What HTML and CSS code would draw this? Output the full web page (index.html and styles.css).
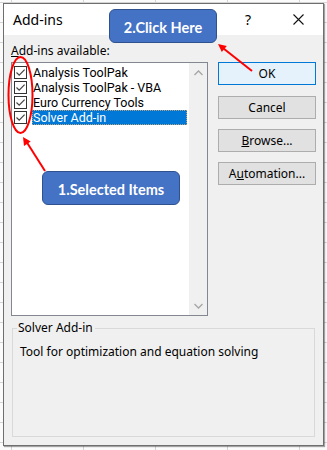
FILE: index.html
```html
<!DOCTYPE html>
<html lang="en">
<head>
    <meta charset="UTF-8">
    <meta name="viewport" content="width=device-width, initial-scale=1.0">
    <title>Add-ins</title>
    <link rel="stylesheet" href="styles.css">
</head>
<body>

    <!-- Dialog -->
    <div class="dialog">
        <div class="titlebar">
            <span class="title">Add-ins</span>
            <span class="help">?</span>
            <span class="close">
                <svg width="11" height="11" viewBox="0 0 11 11"><path d="M0.5 0.5 L10.5 10.5 M10.5 0.5 L0.5 10.5" stroke="#111" stroke-width="1.1" fill="none"/></svg>
            </span>
        </div>

        <div class="dialog-body">
            <div class="label"><u>A</u>dd-ins available:</div>

            <div class="main-row">
                <!-- Add-in list -->
                <div class="listbox">
                    <ul class="items">
                        <li><span class="check"><svg width="11" height="11" viewBox="0 0 11 11"><path d="M1.5 5.5 L4.2 8.2 L9.6 2.6" stroke="#444" stroke-width="1.2" fill="none"/></svg></span><span class="name">Analysis ToolPak</span></li>
                        <li><span class="check"><svg width="11" height="11" viewBox="0 0 11 11"><path d="M1.5 5.5 L4.2 8.2 L9.6 2.6" stroke="#444" stroke-width="1.2" fill="none"/></svg></span><span class="name">Analysis ToolPak - VBA</span></li>
                        <li><span class="check"><svg width="11" height="11" viewBox="0 0 11 11"><path d="M1.5 5.5 L4.2 8.2 L9.6 2.6" stroke="#444" stroke-width="1.2" fill="none"/></svg></span><span class="name">Euro Currency Tools</span></li>
                        <li class="selected"><span class="check"><svg width="11" height="11" viewBox="0 0 11 11"><path d="M1.5 5.5 L4.2 8.2 L9.6 2.6" stroke="#444" stroke-width="1.2" fill="none"/></svg></span><span class="name">Solver Add-in</span></li>
                    </ul>
                    <div class="scrollbar">
                        <svg width="9" height="6" viewBox="0 0 9 6"><path d="M0.5 5 L4.5 1 L8.5 5" stroke="#a6a6a6" stroke-width="1.3" fill="none"/></svg>
                        <svg width="9" height="6" viewBox="0 0 9 6"><path d="M0.5 1 L4.5 5 L8.5 1" stroke="#a6a6a6" stroke-width="1.3" fill="none"/></svg>
                    </div>
                </div>

                <!-- Buttons -->
                <div class="buttons">
                    <button class="btn default">OK</button>
                    <button class="btn">Cancel</button>
                    <button class="btn"><u>B</u>rowse...</button>
                    <button class="btn">A<u>u</u>tomation...</button>
                </div>
            </div>

            <!-- Description -->
            <fieldset class="desc">
                <legend>Solver Add-in</legend>
                <p>Tool for optimization and equation solving</p>
            </fieldset>
        </div>
    </div>

    <!-- Annotations -->
    <svg class="marks" width="327" height="450" viewBox="0 0 327 450">
        <ellipse cx="20.5" cy="95" rx="12" ry="38" fill="none" stroke="#f00" stroke-width="2"/>
        <line x1="45" y1="171" x2="26" y2="141" stroke="#f00" stroke-width="2"/>
        <polygon points="23,137 30.7,141.6 24,145.9" fill="#f00"/>
        <line x1="252" y1="71" x2="221" y2="46.5" stroke="#f00" stroke-width="2"/>
        <polygon points="218,44 226.8,45.9 221.8,52.1" fill="#f00"/>
    </svg>
    <div class="callout callout-click">2.Click Here</div>
    <div class="callout callout-selected">1.Selected Items</div>

</body>
</html>
```

FILE: styles.css
```css
/* General Styles */
body {
    margin: 0;
    padding: 3px 0 0 3px;
    height: 450px;
    box-sizing: border-box;
    overflow: hidden;
    font-family: "Noto Sans", sans-serif;
    font-size: 12px;
    color: #000;
    background-color: #fbfbfb;
    background-image:
        linear-gradient(to right, #d4d4d4 1px, transparent 1px),
        linear-gradient(to bottom, #d4d4d4 1px, transparent 1px);
    background-size: 72px 20px;
    background-position: 11px 2px;
    position: relative;
}

/* Dialog frame */
.dialog {
    width: 321px;
    height: 443px;
    box-sizing: border-box;
    border: 1px solid #6e6e6e;
    box-shadow: 1px 1px 1px rgba(0, 0, 0, 0.35);
    background: #f0f0f0;
    display: flex;
    flex-direction: column;
}

.titlebar {
    height: 31px;
    flex-shrink: 0;
    background: #fff;
    display: flex;
    align-items: center;
    padding-left: 9px;
}

.titlebar .title {
    flex: 1;
    font-size: 14px;
}

.titlebar .help {
    font-size: 14px;
    margin-right: 42px;
}

.titlebar .close {
    display: flex;
    margin-right: 19px;
}

.dialog-body {
    flex: 1;
    display: flex;
    flex-direction: column;
    padding: 8px 7px 0 7px;
}

.label {
    line-height: 16px;
}

/* List + buttons */
.main-row {
    display: flex;
    gap: 10px;
    margin-top: 3px;
}

.listbox {
    width: 197px;
    height: 254px;
    box-sizing: border-box;
    border: 1px solid #828790;
    background: #fff;
    display: flex;
}

.items {
    flex: 1;
    list-style: none;
    margin: 0;
    padding: 2px 2px 0 2px;
}

.items li {
    height: 15px;
    display: flex;
    align-items: center;
    white-space: nowrap;
}

.check {
    width: 13px;
    height: 13px;
    box-sizing: border-box;
    border: 1px solid #333;
    background: #fff;
    margin-right: 5px;
    flex-shrink: 0;
    display: flex;
}

.items .name {
    flex: 1;
    font-family: Roboto, "Noto Sans", sans-serif;
    font-size: 12.5px;
    line-height: 15px;
    padding-left: 1px;
}

.items li.selected .name {
    background: #0078d7;
    color: #fff;
    outline: 1px dotted #b9a27f;
    outline-offset: -1px;
}

.scrollbar {
    width: 18px;
    background: #f0f0f0;
    display: flex;
    flex-direction: column;
    justify-content: space-between;
    align-items: center;
    padding: 7px 0 6px 0;
}

.buttons {
    width: 98px;
    display: flex;
    flex-direction: column;
    gap: 10px;
}

.btn {
    height: 23px;
    box-sizing: border-box;
    border: 1px solid #adadad;
    background: #e1e1e1;
    font-family: "Noto Sans", sans-serif;
    font-size: 12px;
    color: #000;
    padding: 0;
}

.btn.default {
    background: #e5f1fb;
    border-color: #0078d7;
    margin-bottom: 1px;
}

/* Description group */
.desc {
    flex: 1;
    margin: 4px 1px 8px 1px;
    padding: 0 0 0 4px;
    border: 1px solid #d9d9d9;
    min-width: 0;
}

.desc legend {
    padding: 0 2px 0 1px;
    line-height: 16px;
}

.desc p {
    margin: 8px 0 0 3px;
    line-height: 16px;
}

/* Annotations */
.marks {
    position: absolute;
    left: 0;
    top: 0;
}

.callout {
    position: absolute;
    box-sizing: border-box;
    height: 34px;
    padding-top: 2px;
    background: #4472c4;
    border: 1px solid #2f528f;
    border-radius: 6px;
    color: #fff;
    font-family: Lato, sans-serif;
    font-weight: bold;
    font-size: 14.5px;
    display: flex;
    align-items: center;
    justify-content: center;
}

.callout-click {
    left: 109px;
    top: 9px;
    width: 108px;
}

.callout-selected {
    left: 42px;
    top: 171px;
    width: 138px;
}
```
